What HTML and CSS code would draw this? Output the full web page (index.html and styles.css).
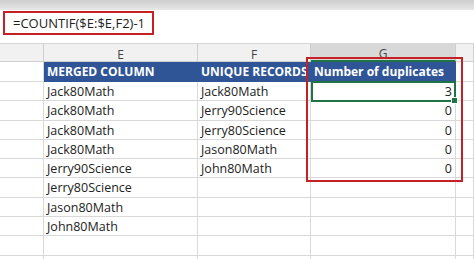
FILE: index.html
```html
<!DOCTYPE html>
<html lang="en">

<head>
    <meta charset="UTF-8">
    <meta name="viewport" content="width=device-width, initial-scale=1.0">
    <title>COUNTIF duplicates</title>
    <link rel="stylesheet" href="styles.css">
</head>

<body>
    <div class="ribbon"></div>

    <div class="formula-bar">
        <div class="formula">=COUNTIF($E:$E,F2)-1</div>
    </div>

    <div class="sheet">
        <div class="grid">
            <!-- column letters -->
            <div class="cell col-head"></div>
            <div class="cell col-head">E</div>
            <div class="cell col-head">F</div>
            <div class="cell col-head selected">G</div>
            <div class="cell col-head"></div>

            <!-- table header -->
            <div class="cell"></div>
            <div class="cell head">MERGED COLUMN</div>
            <div class="cell head">UNIQUE RECORDS</div>
            <div class="cell head">Number of duplicates</div>
            <div class="cell"></div>

            <div class="cell"></div>
            <div class="cell">Jack80Math</div>
            <div class="cell">Jack80Math</div>
            <div class="cell num">3</div>
            <div class="cell"></div>

            <div class="cell"></div>
            <div class="cell">Jack80Math</div>
            <div class="cell">Jerry90Science</div>
            <div class="cell num">0</div>
            <div class="cell"></div>

            <div class="cell"></div>
            <div class="cell">Jack80Math</div>
            <div class="cell">Jerry80Science</div>
            <div class="cell num">0</div>
            <div class="cell"></div>

            <div class="cell"></div>
            <div class="cell">Jack80Math</div>
            <div class="cell">Jason80Math</div>
            <div class="cell num">0</div>
            <div class="cell"></div>

            <div class="cell"></div>
            <div class="cell">Jerry90Science</div>
            <div class="cell">John80Math</div>
            <div class="cell num">0</div>
            <div class="cell"></div>

            <div class="cell"></div>
            <div class="cell">Jerry80Science</div>
            <div class="cell"></div>
            <div class="cell"></div>
            <div class="cell"></div>

            <div class="cell"></div>
            <div class="cell">Jason80Math</div>
            <div class="cell"></div>
            <div class="cell"></div>
            <div class="cell"></div>

            <div class="cell"></div>
            <div class="cell">John80Math</div>
            <div class="cell"></div>
            <div class="cell"></div>
            <div class="cell"></div>

            <div class="cell"></div>
            <div class="cell"></div>
            <div class="cell"></div>
            <div class="cell"></div>
            <div class="cell"></div>

            <div class="cell"></div>
            <div class="cell"></div>
            <div class="cell"></div>
            <div class="cell"></div>
            <div class="cell"></div>
        </div>

        <div class="active-cell"><span class="handle"></span></div>
        <div class="callout"></div>
    </div>
</body>

</html>
```

FILE: styles.css
```css
body {
    margin: 0;
    background: #fff;
    font-family: "Open Sans", "Liberation Sans", sans-serif;
    color: #222;
    overflow: hidden;
}

.ribbon {
    height: 10px;
    background: linear-gradient(#cdcdcd, #e8e8e8);
}

.formula-bar {
    height: 33px;
    padding: 1px 0 0 3px;
    box-sizing: border-box;
}

.formula {
    width: 151px;
    height: 24px;
    box-sizing: border-box;
    border: 2px solid #c42026;
    padding: 0 0 0 8px;
    font-size: 13px;
    line-height: 20px;
    color: #222;
}

.sheet {
    position: relative;
    height: 216px;
    overflow: hidden;
}

.grid {
    display: grid;
    grid-template-columns: 44px 154px 113px 145px 1fr;
    grid-template-rows: 19px 20px;
    grid-auto-rows: 19.3px;
}

.cell {
    border-right: 1px solid #d9d9d9;
    border-bottom: 1px solid #d9d9d9;
    box-sizing: border-box;
    padding: 0 3px;
    font-size: 12.5px;
    line-height: 20px;
    white-space: nowrap;
    overflow: hidden;
}

.col-head {
    background: #f1f1f1;
    border-top: 1px solid #d6d6d6;
    border-right-color: #cfcfcf;
    border-bottom-color: #cfcfcf;
    color: #444;
    text-align: center;
    font-size: 12px;
    line-height: 17px;
    padding-top: 2px;
}

.col-head.selected {
    background: #d8d8d8;
    border-bottom: 2px solid #217346;
    line-height: 16px;
}

.head {
    background: #2f5597;
    color: #fff;
    font-weight: bold;
    font-size: 12px;
    border-right: none;
    border-bottom: none;
}

.num {
    text-align: right;
    padding-right: 3px;
}

.active-cell {
    position: absolute;
    left: 311px;
    top: 38px;
    width: 145px;
    height: 21px;
    box-sizing: border-box;
    border: 2px solid #217346;
}

.handle {
    position: absolute;
    right: -4px;
    bottom: -4px;
    width: 5px;
    height: 5px;
    background: #217346;
    border: 1px solid #fff;
}

.callout {
    position: absolute;
    left: 306px;
    top: 14px;
    width: 157px;
    height: 125px;
    box-sizing: border-box;
    border: 2px solid #c42026;
}
```
